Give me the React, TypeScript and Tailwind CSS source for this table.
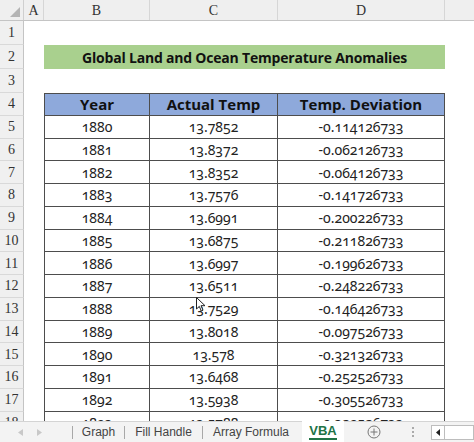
const data: [string, string, string][] = [
  ["1880", "13.7852", "-0.114126733"],
  ["1881", "13.8372", "-0.062126733"],
  ["1882", "13.8352", "-0.064126733"],
  ["1883", "13.7576", "-0.141726733"],
  ["1884", "13.6991", "-0.200226733"],
  ["1885", "13.6875", "-0.211826733"],
  ["1886", "13.6997", "-0.199626733"],
  ["1887", "13.6511", "-0.248226733"],
  ["1888", "13.7529", "-0.146426733"],
  ["1889", "13.8018", "-0.097526733"],
  ["1890", "13.578", "-0.321326733"],
  ["1891", "13.6468", "-0.252526733"],
  ["1892", "13.5938", "-0.305526733"],
  ["1893", "13.5788", "-0.320526733"],
];

const headFont = { fontFamily: '"Liberation Serif", serif' };

const RowHead = ({ n }: { n: number }) => (
  <div
    className="w-[24px] shrink-0 flex items-center justify-center bg-[#f0f0f0] border-r border-b border-r-[#c4c4c4] border-b-[#d9d9d9] text-[14px] text-[#333]"
    style={headFont}
  >
    {n}
  </div>
);

const cell = "flex items-center justify-center border-r border-b border-[#4d4d4d]";
const head = "bg-[#8ea9db] font-bold text-[15px] text-[#111] font-['Open_Sans',sans-serif] border-t";

export default function App() {
  return (
    <div className="w-[474px] h-[442px] overflow-hidden bg-white flex flex-col relative font-['Noto_Sans',sans-serif]">
      {/* column letters */}
      <div className="h-[21px] shrink-0 flex bg-[#efefef] border-b border-[#c4c4c4] text-[14px] text-[#333]" style={headFont}>
        <div className="w-[24px] border-r border-[#cfcfcf] relative">
          <svg className="absolute right-[3px] bottom-[3px]" width="10" height="10" viewBox="0 0 10 10">
            <polygon points="10,0 10,10 0,10" fill="#b4b4b4" />
          </svg>
        </div>
        <div className="w-[20px] border-r border-[#d6d6d6] flex items-center justify-center">A</div>
        <div className="w-[106px] border-r border-[#d6d6d6] flex items-center justify-center">B</div>
        <div className="w-[128px] border-r border-[#d6d6d6] flex items-center justify-center">C</div>
        <div className="w-[167px] border-r border-[#d6d6d6] flex items-center justify-center">D</div>
        <div className="flex-1" />
      </div>

      {/* sheet body */}
      <div className="h-[400px] shrink-0 overflow-hidden">
        <div className="flex h-[24px]">
          <RowHead n={1} />
        </div>
        <div className="flex h-[24px]">
          <RowHead n={2} />
          <div className="w-[20px]" />
          <div className="w-[401px] bg-[#a9d08e] flex items-center justify-center font-bold text-[14px] text-[#111] font-['Open_Sans',sans-serif] tracking-[-0.2px]">
            Global Land and Ocean Temperature Anomalies
          </div>
        </div>
        <div className="flex h-[24px]">
          <RowHead n={3} />
        </div>
        <div className="flex h-[22.75px]">
          <RowHead n={4} />
          <div className="w-[20px]" />
          <div className={`${cell} ${head} w-[106px] border-l`}>Year</div>
          <div className={`${cell} ${head} w-[128px]`}>Actual Temp</div>
          <div className={`${cell} ${head} w-[167px]`}>Temp. Deviation</div>
        </div>
        {data.map(([y, t, d], i) => (
          <div key={y} className="flex h-[22.75px] text-[14px] text-[#222] oldstyle-nums">
            <RowHead n={i + 5} />
            <div className="w-[20px]" />
            <div className={`${cell} w-[106px] border-l`}>{y}</div>
            <div className={`${cell} w-[128px]`}>{t}</div>
            <div className={`${cell} w-[167px]`}>{d}</div>
          </div>
        ))}
      </div>

      {/* sheet tabs */}
      <div className="h-[21px] shrink-0 flex items-stretch bg-[#f3f3f3] border-t border-[#d4d4d4] text-[12px] text-[#444] font-['Liberation_Sans',sans-serif] whitespace-nowrap">
        <div className="w-[72px] flex items-center gap-[14px] pl-[18px]">
          <svg width="5" height="7" viewBox="0 0 5 7"><polygon points="5,0 5,7 0,3.5" fill="#c8c8c8" /></svg>
          <svg width="5" height="7" viewBox="0 0 5 7"><polygon points="0,0 0,7 5,3.5" fill="#c8c8c8" /></svg>
        </div>
        <span className="w-px h-[13px] self-center bg-[#a8a8a8]" />
        <div className="w-[51px] flex items-center justify-center">Graph</div>
        <span className="w-px h-[13px] self-center bg-[#a8a8a8]" />
        <div className="w-[77px] flex items-center justify-center">Fill Handle</div>
        <span className="w-px h-[13px] self-center bg-[#a8a8a8]" />
        <div className="w-[99px] flex items-center pl-[10px]">Array Formula</div>
        <div className="w-[42px] -mt-px bg-white flex items-center justify-center">
          <span className="font-bold text-[13px] text-[#217346] leading-[15px] border-b-2 border-[#217346]">VBA</span>
        </div>
        <div className="w-[60px] flex items-center justify-center">
          <svg width="14" height="14" viewBox="0 0 14 14">
            <circle cx="7" cy="7" r="6" fill="none" stroke="#777" strokeWidth="1" />
            <path d="M7 3.5v7M3.5 7h7" stroke="#777" strokeWidth="1" />
          </svg>
        </div>
        <div className="w-[17px] flex flex-col items-center justify-center gap-[2px]">
          <span className="w-[2px] h-[2px] bg-[#aaa]" />
          <span className="w-[2px] h-[2px] bg-[#aaa]" />
          <span className="w-[2px] h-[2px] bg-[#aaa]" />
        </div>
        <div className="flex-1 flex items-center pl-[10px]">
          <div className="w-[14px] h-[15px] bg-white border border-[#bdbdbd] flex items-center justify-center">
            <svg width="4" height="7" viewBox="0 0 4 7"><polygon points="4,0 4,7 0,3.5" fill="#222" /></svg>
          </div>
          <div className="flex-1 h-[15px] bg-white border border-l-0 border-[#bdbdbd]" />
        </div>
      </div>

      {/* mouse pointer */}
      <svg className="absolute left-[196px] top-[297px]" width="10" height="15" viewBox="0 0 10 15">
        <path d="M0.5 0.5 L0.5 12 L3.3 9.4 L5.3 14 L7 13.2 L5 8.7 L9 8.7 Z" fill="#fff" stroke="#222" strokeWidth="1" />
      </svg>
    </div>
  );
}
